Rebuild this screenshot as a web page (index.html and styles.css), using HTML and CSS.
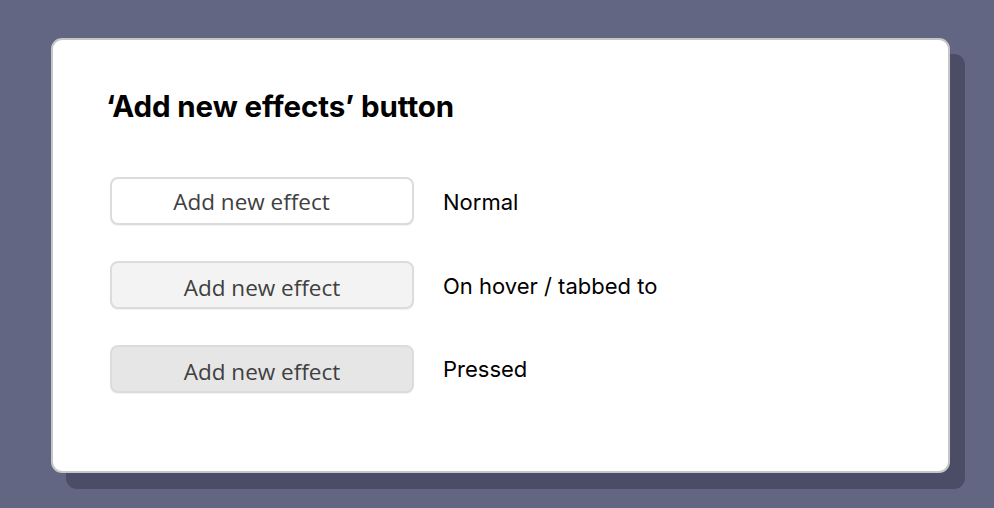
FILE: index.html
```html
<!DOCTYPE html>
<html>
<head>
<meta charset="utf-8">
<link rel="stylesheet" href="styles.css">
</head>
<body>
<div class="card">
  <h1 class="title">‘Add new effects’ button</h1>
  <div class="rows">
    <div class="row">
      <div class="btn btn-normal"><span class="btn-text shift">Add new effect</span></div>
      <div class="label">Normal</div>
    </div>
    <div class="row">
      <div class="btn btn-hover"><span class="btn-text">Add new effect</span></div>
      <div class="label">On hover / tabbed to</div>
    </div>
    <div class="row">
      <div class="btn btn-pressed"><span class="btn-text">Add new effect</span></div>
      <div class="label">Pressed</div>
    </div>
  </div>
</div>
</body>
</html>
```
FILE: styles.css
```css
html, body {
  margin: 0;
  padding: 0;
}
body {
  background: #636682;
  width: 994px;
  height: 508px;
  padding: 38px 0 0 51px;
  box-sizing: border-box;
  overflow: hidden;
}
.card {
  width: 899px;
  height: 435px;
  box-sizing: border-box;
  background: #ffffff;
  border: 2px solid #c6c6c6;
  border-radius: 11px;
  box-shadow: 15px 16px 0 0 #4b4d66;
  padding: 48px 0 0 55px;
}
.title {
  margin: 0 0 0 -2px;
  font-family: Inter, "Liberation Sans", sans-serif;
  font-weight: 700;
  font-size: 29.5px;
  line-height: 36px;
  color: #000;
  letter-spacing: -0.1px;
}
.rows {
  margin-top: 53px;
  display: flex;
  flex-direction: column;
  gap: 36px;
  padding-left: 2px;
}
.row {
  display: flex;
  align-items: center;
  gap: 29px;
}
.btn {
  width: 304px;
  height: 48px;
  box-sizing: border-box;
  border: 2px solid #dcdcdc;
  border-radius: 8px;
  display: flex;
  align-items: center;
  justify-content: center;
  box-shadow: 0 1px 1px rgba(0,0,0,0.06);
}
.btn-normal { background: #ffffff; }
.btn-hover { background: #f3f3f3; padding-top: 5px; }
.btn-pressed { background: #e6e6e6; padding-top: 5px; }
.btn-text {
  font-family: "Open Sans", "Noto Sans", sans-serif;
  font-size: 22.5px;
  color: #404040;
}
.shift { margin-right: 21px; }
.label {
  font-family: Inter, "Liberation Sans", sans-serif;
  font-size: 22px;
  color: #000;
  padding-top: 2px;
}
.row:last-child .label { padding-top: 0; }
```
